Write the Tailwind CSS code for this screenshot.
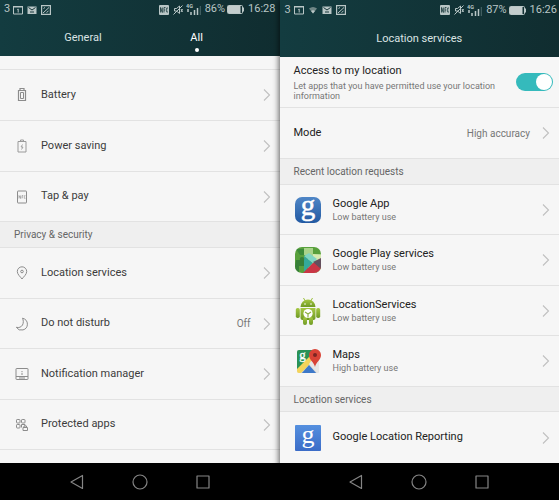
<!DOCTYPE html>
<html lang="en">
<head>
<meta charset="utf-8">
<meta name="viewport" content="width=device-width, initial-scale=1">
<title>Settings</title>
<script src="https://cdn.jsdelivr.net/npm/@tailwindcss/browser@4"></script>
</head>
<body class="bg-black font-[Roboto,sans-serif] text-[#3c3c3c]">
<svg class="hidden" aria-hidden="true">
  <symbol id="chevron" viewBox="0 0 8 14"><path d="M1 1.500 6.500 7 1 12.500" fill="none" stroke="#c0c0c0" stroke-width="1.100"/></symbol>
  <symbol id="calendar" viewBox="0 0 10 10"><path d="M.5 1.500h9v7.500h-9z" fill="none" stroke="#b9c6c6"/><path d="M0 1h10v1.500H0z" fill="#b9c6c6"/><path d="M4.300 4.500 5.200 4v3.500" fill="none" stroke="#b9c6c6"/></symbol>
  <symbol id="mail" viewBox="0 0 10 10"><path d="M.5 1.500h9v7.500h-9z" fill="#b9c6c6"/><path d="m1.500 2.500 3.500 2.500 3.500-2.500M3 7h4" fill="none" stroke="#17373a"/></symbol>
  <symbol id="shot" viewBox="0 0 10 10"><path d="M.6.6h8.800v8.800H.6z" fill="none" stroke="#b9c6c6" stroke-width="1.200"/><path d="m2 8 6-5.500M2.500 3.500 4 2.500M5.500 7.500 7.500 6" fill="none" stroke="#b9c6c6"/></symbol>
  <symbol id="wifi" viewBox="0 0 10 10"><path d="M1 3.500Q5 .5 9 3.500L5 8.500z" fill="#6f8686"/><path d="M3 6q2-1.500 4 0L5 8.500z" fill="#b9c6c6"/></symbol>
  <symbol id="nfc" viewBox="0 0 10 10"><rect width="10" height="10" rx="1" fill="#b9c6c6"/><path d="M1.500 7.500v-5l1.800 5v-5M5 7.500v-5h1.500M5 5h1.300M9 3H7.700v4H9" fill="none" stroke="#17373a" stroke-width=".8"/></symbol>
  <symbol id="mute" viewBox="0 0 10 10"><path d="M1.500 3.500h2l3-2.500v7.500l-3-2.500h-2zM.5 9.500l9-9M8 4l1.500 3M9.500 4 8 7" fill="none" stroke="#b9c6c6"/></symbol>
  <symbol id="signal" viewBox="0 0 15 13"><text x="0" y="4.500" font-size="5.500" font-weight="bold" fill="#b9c6c6">4G</text><path d="M2 6v3M5 9v3M8.500 7v5M11.500 5v7" stroke="#b9c6c6" stroke-width="1.500"/><path d="M14.300 3v9" stroke="#4d6a6c"/></symbol>
  <symbol id="cell" viewBox="0 0 17 9"><rect x=".5" y=".5" width="15" height="8" rx="1" fill="none" stroke="#b9c6c6"/><path d="M1 1h12.500v7H1z" fill="#c3cdcd"/><path d="M16 2.500h1v4h-1z" fill="#b9c6c6"/></symbol>
  <symbol id="back" viewBox="0 0 14 16"><path d="M12.500 1.500v13L1 8z" fill="none" stroke="#858585" stroke-width="1.200" stroke-linejoin="round"/></symbol>
  <symbol id="home" viewBox="0 0 16 16"><circle cx="8" cy="8" r="7" fill="none" stroke="#858585" stroke-width="1.200"/></symbol>
  <symbol id="recent" viewBox="0 0 14 14"><path d="M1 1h12v12H1z" fill="none" stroke="#858585" stroke-width="1.200" stroke-linejoin="round"/></symbol>
</svg>

<div class="grid min-h-screen grid-cols-2 overflow-hidden">
  <section class="flex min-w-0 flex-col bg-[#f6f6f6]">
    <header class="h-14 bg-linear-to-r from-[#133c40] to-[#102d30] text-[#dbe4e4]">
      <div class="flex h-[19px] items-center pr-1 pl-1 text-[11px] text-[#b9c6c6]">
        <span>3</span>
        <svg class="ml-[3px] size-[10px]"><use href="#calendar"/></svg>
        <svg class="ml-1 size-[10px]"><use href="#mail"/></svg>
        <svg class="ml-1 size-[10px]"><use href="#shot"/></svg>
        <span class="grow"></span>
        <svg class="size-[10px]"><use href="#nfc"/></svg>
        <svg class="ml-1 size-[10px]"><use href="#mute"/></svg>
        <svg class="ml-[3px] h-[13px] w-[15px]"><use href="#signal"/></svg>
        <span class="ml-1">86%</span>
        <svg class="ml-[2px] h-[9px] w-[17px]"><use href="#cell"/></svg>
        <span class="ml-1">16:28</span>
      </div>
      <nav class="grid grid-cols-2 px-[26px] text-[11px]">
        <a href="#general" class="pt-[10px] text-center leading-[18px]">General</a>
        <a href="#all" class="flex flex-col items-center gap-px pt-[10px] leading-[18px] text-white">All<span class="size-1 rounded-full bg-white"></span></a>
      </nav>
    </header>
    <main class="grow bg-[#f6f6f6]">
      <div class="h-[14px] border-b border-[#e2e2e2]"></div>
      <a href="#battery" class="flex h-[51px] items-center border-b border-[#e2e2e2] pr-[9px] pl-[14px]">
        <svg class="size-4" viewBox="0 0 16 16" fill="none" stroke="#8c8c8c"><path d="M4.500 3.500h7v10h-7zM6 3V1.500h4V3" stroke-width="1.200"/><path d="M6.500 5.500h3v6h-3z"/></svg>
        <span class="ml-[11px] grow text-[11px]">Battery</span><svg class="h-[14px] w-2"><use href="#chevron"/></svg>
      </a>
      <a href="#power" class="flex h-[51px] items-center border-b border-[#e2e2e2] pr-[9px] pl-[14px]">
        <svg class="size-4" viewBox="0 0 16 16" fill="none" stroke="#9a9a9a"><path d="M4 3.500h8v10.500H4zM6.500 3V2h3v1"/><path d="M8.500 6.500 7 9h2l-1.500 2.500" stroke-width=".9"/></svg>
        <span class="ml-[11px] grow text-[11px]">Power saving</span><svg class="h-[14px] w-2"><use href="#chevron"/></svg>
      </a>
      <a href="#pay" class="flex h-[50px] items-center border-b border-[#e2e2e2] pr-[9px] pl-[14px]">
        <svg class="size-4" viewBox="0 0 16 16" fill="none" stroke="#8c8c8c"><rect x="3.500" y="2" width="9" height="12" rx=".5"/><path d="M5 9.500v-3l1.500 3v-3M8 9.500v-3h1.200M8 8h1M11.500 6.700h-1.200v2.600h1.200" stroke-width=".6"/></svg>
        <span class="ml-[11px] grow text-[11px]">Tap &amp; pay</span><svg class="h-[14px] w-2"><use href="#chevron"/></svg>
      </a>
      <h2 class="flex h-[26px] items-center border-b border-[#e2e2e2] bg-[#efefef] pl-[14px] text-[10px] text-[#666]">Privacy &amp; security</h2>
      <a href="#location" class="flex h-[51px] items-center border-b border-[#e2e2e2] pr-[9px] pl-[14px]">
        <svg class="size-4" viewBox="0 0 16 16" fill="none" stroke="#8c8c8c"><path d="M8 14C6.500 11.800 3.300 9.500 3.300 6.500a4.700 4.700 0 0 1 9.400 0C12.700 9.500 9.500 11.800 8 14z"/><circle cx="8" cy="6.500" r="1.300"/></svg>
        <span class="ml-[11px] grow text-[11px]">Location services</span><svg class="h-[14px] w-2"><use href="#chevron"/></svg>
      </a>
      <a href="#dnd" class="flex h-[50px] items-center border-b border-[#e2e2e2] pr-[9px] pl-[14px]">
        <svg class="size-4" viewBox="0 0 16 16" fill="none" stroke="#8c8c8c" stroke-linejoin="round"><path d="M8.500 2.200c3 .6 5 3 4.900 6A6 6 0 0 1 2.300 11.300c2.700.7 5-.2 6.200-2.300 1.200-2.200 1-4.600 0-6.800z"/></svg>
        <span class="ml-[11px] grow text-[11px]">Do not disturb</span><span class="mr-3 text-[10px] text-[#777]">Off</span><svg class="h-[14px] w-2"><use href="#chevron"/></svg>
      </a>
      <a href="#notifications" class="flex h-[51px] items-center border-b border-[#e2e2e2] pr-[9px] pl-[14px]">
        <svg class="size-4" viewBox="0 0 16 16" fill="none" stroke="#8c8c8c"><rect x="2" y="2.500" width="12" height="11" rx=".5"/><path d="M2 10.500h12M5 12h6M8 5v1M8 6.800V9"/></svg>
        <span class="ml-[11px] grow text-[11px]">Notification manager</span><svg class="h-[14px] w-2"><use href="#chevron"/></svg>
      </a>
      <a href="#protected" class="flex h-[50px] items-center border-b border-[#e2e2e2] pr-[9px] pl-[14px]">
        <svg class="size-4" viewBox="0 0 16 16" fill="none" stroke="#8c8c8c"><rect x="2.500" y="2.500" width="3.500" height="3.500" rx=".7"/><rect x="7.500" y="2.500" width="3.500" height="3.500" rx=".7"/><rect x="2.500" y="7.500" width="3.500" height="3.500" rx=".7"/><path d="M7.500 10.500v-3H11V9M9 10.500h4.500v3H9zM10 10.500V9h2.500v1.500"/></svg>
        <span class="ml-[11px] grow text-[11px]">Protected apps</span><svg class="h-[14px] w-2"><use href="#chevron"/></svg>
      </a>
    </main>
    <footer class="flex h-[37px] items-center justify-center gap-12 bg-black">
      <button aria-label="Back"><svg class="h-4 w-[14px]"><use href="#back"/></svg></button>
      <button aria-label="Home"><svg class="size-4"><use href="#home"/></svg></button>
      <button aria-label="Recent apps"><svg class="size-[14px]"><use href="#recent"/></svg></button>
    </footer>
  </section>

  <section class="z-10 flex min-w-0 flex-col bg-[#f6f6f6] shadow-[-1px_0_6px_#000000a0]">
    <header class="h-[57px] bg-linear-to-r from-[#133c40] to-[#102d30] text-[#dbe4e4]">
      <div class="flex h-5 items-center pr-[2px] pl-[5px] text-[11px] text-[#b9c6c6]">
        <span>3</span>
        <svg class="ml-[3px] size-[10px]"><use href="#calendar"/></svg>
        <svg class="ml-1 size-[10px]"><use href="#wifi"/></svg>
        <svg class="ml-1 size-[10px]"><use href="#mail"/></svg>
        <svg class="ml-1 size-[10px]"><use href="#shot"/></svg>
        <span class="grow"></span>
        <svg class="size-[10px]"><use href="#nfc"/></svg>
        <svg class="ml-1 size-[10px]"><use href="#mute"/></svg>
        <svg class="ml-[3px] h-[13px] w-[15px]"><use href="#signal"/></svg>
        <span class="ml-1">87%</span>
        <svg class="ml-[2px] h-[9px] w-[17px]"><use href="#cell"/></svg>
        <span class="ml-1">16:26</span>
      </div>
      <h1 class="pt-[10px] text-center text-[11px] leading-[18px]">Location services</h1>
    </header>
    <main class="flex grow flex-col bg-[#f6f6f6]">
      <label class="flex h-[51px] items-center border-b border-[#e2e2e2] pr-[6px] pl-[14px]">
        <span class="grow"><span class="block text-[11px] leading-4 text-[#222]">Access to my location</span><span class="mt-[2px] block max-w-[210px] text-[9px] leading-[10px] text-[#777]">Let apps that you have permitted use your location information</span></span>
        <input type="checkbox" role="switch" checked class="peer sr-only">
        <span class="flex h-[18px] w-[37px] shrink-0 justify-end rounded-full bg-[#35babc] p-px"><span class="size-4 rounded-full bg-white"></span></span>
      </label>
      <a href="#mode" class="flex h-[51px] items-center border-b border-[#e2e2e2] pr-[9px] pl-[14px]">
        <span class="grow text-[11px] text-[#222]">Mode</span><span class="mr-3 text-[10px] text-[#777]">High accuracy</span><svg class="h-[14px] w-2"><use href="#chevron"/></svg>
      </a>
      <h2 class="flex h-[26px] items-center border-b border-[#e2e2e2] bg-[#efefef] pl-[14px] text-[10px] text-[#666]">Recent location requests</h2>
      <a href="#google" class="flex h-[50px] items-center border-b border-[#e2e2e2] pr-[9px] pl-[14px]">
        <svg class="size-7 overflow-visible" viewBox="0 0 28 28"><defs><linearGradient id="blue" x2="0" y2="1"><stop stop-color="#4f86c6"/><stop offset="1" stop-color="#2259a2"/></linearGradient></defs><rect x="1" y="1" width="26" height="26" rx="7" fill="url(#blue)"/><text x="14" y="19" text-anchor="middle" font-family="Liberation Serif, serif" font-size="29" fill="#fff" stroke="#fff" stroke-width=".5">g</text></svg>
        <span class="ml-[11px] grow"><span class="block text-[11px] leading-[15px] text-[#222]">Google App</span><span class="block text-[9px] leading-[13px] text-[#777]">Low battery use</span></span><svg class="h-[14px] w-2"><use href="#chevron"/></svg>
      </a>
      <a href="#play" class="flex h-[51px] items-center border-b border-[#e2e2e2] pr-[9px] pl-[14px]">
        <svg class="size-7" viewBox="0 0 28 28"><clipPath id="tile"><rect x="1" y="1" width="26" height="26" rx="7"/></clipPath><g clip-path="url(#tile)"><path d="M0 0h28v28H0z" fill="#58a03c"/><path d="M10 2h9v6h8v19H14V9h-4z" fill="#a9d48a"/><path d="m19 8 8 1v6l-8-1z" fill="#d7ebb0"/><path d="M10 10v16l9-9z" fill="#35a99a"/><path d="m10 10 9 7 4-4-8-6z" fill="#80d5c2"/><path d="m19 17-10 10h18V17z" fill="#c93645"/><path d="m19 16 8 7V12z" fill="#63505e"/><path d="M2 14h4q-1-3 2-3t2 3v6H5v7H0z" fill="#367f38"/><path d="M2 3h8v6H6z" fill="#3c8b39"/></g></svg>
        <span class="ml-[11px] grow"><span class="block text-[11px] leading-[15px] text-[#222]">Google Play services</span><span class="block text-[9px] leading-[13px] text-[#777]">Low battery use</span></span><svg class="h-[14px] w-2"><use href="#chevron"/></svg>
      </a>
      <a href="#locationservices" class="flex h-[50px] items-center border-b border-[#e2e2e2] pr-[9px] pl-[14px]">
        <svg class="size-7" viewBox="0 0 28 28"><defs><linearGradient id="droid" x2="0" y2="1"><stop stop-color="#a6c843"/><stop offset="1" stop-color="#6f9a25"/></linearGradient></defs><path d="m9.500 1 2 3.500M18.500 1l-2 3.500" stroke="#9abf3a"/><g fill="url(#droid)"><path d="M6.500 10a7.500 7.500 0 0 1 15 0z"/><path d="M6.500 11h15v10q0 2-2 2h-11q-2 0-2-2z"/><rect x="1.800" y="11" width="4" height="10" rx="1.800"/><rect x="22.200" y="11" width="4" height="10" rx="1.800"/><rect x="9" y="20" width="4" height="8" rx="2"/><rect x="15" y="20" width="4" height="8" rx="2"/></g><circle cx="11" cy="7" r=".8" fill="#fff"/><circle cx="17" cy="7" r=".8" fill="#fff"/><circle cx="14" cy="16.500" r="4.600" fill="#fff"/><path d="M14 17v3.500M14 17l-3-2M14 17l3-2" stroke="#8caf42" stroke-width="1.200"/></svg>
        <span class="ml-[11px] grow"><span class="block text-[11px] leading-[15px] text-[#222]">LocationServices</span><span class="block text-[9px] leading-[13px] text-[#777]">Low battery use</span></span><svg class="h-[14px] w-2"><use href="#chevron"/></svg>
      </a>
      <a href="#maps" class="flex h-[51px] items-center border-b border-[#e2e2e2] pr-[9px] pl-[14px]">
        <svg class="size-7" viewBox="0 0 28 28"><clipPath id="map"><rect x="3" y="3" width="22" height="23" rx="2"/></clipPath><g clip-path="url(#map)"><path d="M0 0h28v28H0z" fill="#d8d8d5"/><path d="M0 0h25L3 24z" fill="#299257"/><path d="M3 22 18 7l4 4L6 27H3z" fill="#f4d45b"/><path d="m7 27 8-9 8 9z" fill="#3e79c9"/><path d="m15 17 9 10h3V14l-8-3z" fill="#e7e7e5"/></g><text x="8.500" y="12" text-anchor="middle" font-family="Liberation Serif, serif" font-size="13" fill="#fff" stroke="#fff" stroke-width=".3">g</text><path d="M21 20c-1-5-6-7-6-12a6 6 0 0 1 12 0c0 5-5 7-6 12z" fill="#d94336"/><circle cx="21" cy="8" r="2" fill="#7d2522"/></svg>
        <span class="ml-[11px] grow"><span class="block text-[11px] leading-[15px] text-[#222]">Maps</span><span class="block text-[9px] leading-[13px] text-[#777]">High battery use</span></span><svg class="h-[14px] w-2"><use href="#chevron"/></svg>
      </a>
      <h2 class="flex h-[25px] items-center border-b border-[#e2e2e2] bg-[#efefef] pl-[14px] text-[10px] text-[#666]">Location services</h2>
      <a href="#reporting" class="flex min-h-[50px] grow items-center pr-[9px] pl-[14px]">
        <svg class="size-7 overflow-visible" viewBox="0 0 28 28"><defs><linearGradient id="sky" x2="0" y2="1"><stop stop-color="#5590df"/><stop offset="1" stop-color="#3b6cc7"/></linearGradient></defs><rect x="1" y="1" width="26" height="26" rx="1" fill="url(#sky)"/><text x="14" y="19" text-anchor="middle" font-family="Liberation Serif, serif" font-size="26" fill="#fff">g</text></svg>
        <span class="ml-[11px] grow text-[11px] text-[#222]">Google Location Reporting</span><svg class="h-[14px] w-2"><use href="#chevron"/></svg>
      </a>
    </main>
    <footer class="flex h-[37px] items-center justify-center gap-12 bg-black">
      <button aria-label="Back"><svg class="h-4 w-[14px]"><use href="#back"/></svg></button>
      <button aria-label="Home"><svg class="size-4"><use href="#home"/></svg></button>
      <button aria-label="Recent apps"><svg class="size-[14px]"><use href="#recent"/></svg></button>
    </footer>
  </section>
</div>
</body>
</html>
